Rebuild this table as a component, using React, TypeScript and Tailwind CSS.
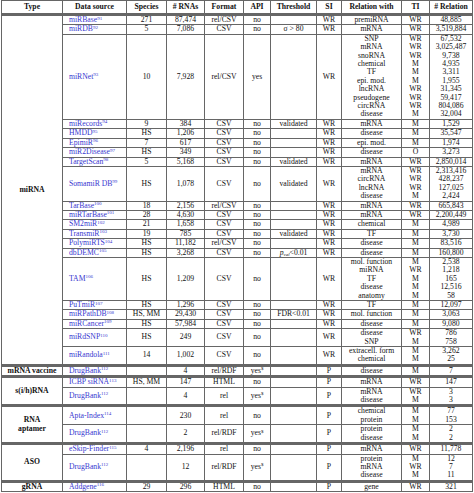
import type { ReactNode } from "react";

type Rel = [string, string, string];

interface Row {
  src: string;
  cite: string;
  species?: string;
  rnas: string;
  format: string;
  api: ReactNode;
  thr?: ReactNode;
  si: string;
  rel: Rel[];
}

interface Group {
  type: ReactNode;
  rows: Row[];
}

const yesS = (
  <>
    yes<sup className="text-[5px]">$</sup>
  </>
);

const groups: Group[] = [
  {
    type: "miRNA",
    rows: [
      { src: "miRBase", cite: "91", species: "271", rnas: "87,474", format: "rel/CSV", api: "no", si: "WR", rel: [["premiRNA", "WR", "48,885"]] },
      { src: "miRDB", cite: "92", species: "5", rnas: "7,086", format: "CSV", api: "no", thr: "σ > 80", si: "WR", rel: [["mRNA", "WR", "3,519,884"]] },
      {
        src: "miRNet", cite: "93", species: "10", rnas: "7,928", format: "rel/CSV", api: "yes", si: "WR",
        rel: [
          ["SNP", "WR", "67,532"],
          ["mRNA", "WR", "3,025,487"],
          ["snoRNA", "WR", "9,738"],
          ["chemical", "M", "4,935"],
          ["TF", "M", "3,311"],
          ["epi. mod.", "M", "1,955"],
          ["lncRNA", "WR", "31,345"],
          ["pseudogene", "WR", "59,417"],
          ["circRNA", "WR", "804,086"],
          ["disease", "M", "32,004"],
        ],
      },
      { src: "miRecords", cite: "94", species: "9", rnas: "384", format: "CSV", api: "no", thr: "validated", si: "WR", rel: [["mRNA", "M", "1,529"]] },
      { src: "HMDD", cite: "95", species: "HS", rnas: "1,206", format: "CSV", api: "no", si: "WR", rel: [["disease", "M", "35,547"]] },
      { src: "EpimiR", cite: "96", species: "7", rnas: "617", format: "CSV", api: "no", si: "WR", rel: [["epi. mod.", "M", "1,974"]] },
      { src: "miR2Disease", cite: "97", species: "HS", rnas: "349", format: "CSV", api: "no", si: "WR", rel: [["disease", "O", "3,273"]] },
      { src: "TargetScan", cite: "98", species: "5", rnas: "5,168", format: "CSV", api: "no", thr: "validated", si: "WR", rel: [["mRNA", "WR", "2,850,014"]] },
      {
        src: "SomamiR DB", cite: "99", species: "HS", rnas: "1,078", format: "CSV", api: "no", thr: "validated", si: "WR",
        rel: [
          ["mRNA", "WR", "2,313,416"],
          ["circRNA", "WR", "428,237"],
          ["lncRNA", "WR", "127,025"],
          ["disease", "M", "2,424"],
        ],
      },
      { src: "TarBase", cite: "100", species: "18", rnas: "2,156", format: "rel/CSV", api: "no", si: "WR", rel: [["mRNA", "WR", "665,843"]] },
      { src: "miRTarBase", cite: "101", species: "28", rnas: "4,630", format: "CSV", api: "no", si: "WR", rel: [["mRNA", "WR", "2,200,449"]] },
      { src: "SM2miR", cite: "102", species: "21", rnas: "1,658", format: "CSV", api: "no", si: "WR", rel: [["chemical", "M", "4,989"]] },
      { src: "TransmiR", cite: "103", species: "19", rnas: "785", format: "CSV", api: "no", thr: "validated", si: "WR", rel: [["TF", "M", "3,730"]] },
      { src: "PolymiRTS", cite: "104", species: "HS", rnas: "11,182", format: "rel/CSV", api: "no", si: "WR", rel: [["disease", "M", "83,516"]] },
      {
        src: "dbDEMC", cite: "105", species: "HS", rnas: "3,268", format: "CSV", api: "no", si: "WR",
        thr: (
          <>
            <i>p</i>
            <sub className="text-[5px] italic">val</sub>&lt;0.01
          </>
        ),
        rel: [["disease", "M", "160,800"]],
      },
      {
        src: "TAM", cite: "106", species: "HS", rnas: "1,209", format: "CSV", api: "no", si: "WR",
        rel: [
          ["mol. function", "M", "2,538"],
          ["miRNA", "WR", "1,218"],
          ["TF", "M", "165"],
          ["disease", "M", "12,516"],
          ["anatomy", "M", "58"],
        ],
      },
      { src: "PuTmiR", cite: "107", species: "HS", rnas: "1,296", format: "CSV", api: "no", si: "WR", rel: [["TF", "M", "12,097"]] },
      { src: "miRPathDB", cite: "108", species: "HS, MM", rnas: "29,430", format: "CSV", api: "no", thr: "FDR<0.01", si: "WR", rel: [["mol. function", "M", "3,063"]] },
      { src: "miRCancer", cite: "109", species: "HS", rnas: "57,984", format: "CSV", api: "no", si: "WR", rel: [["disease", "M", "9,080"]] },
      {
        src: "miRdSNP", cite: "110", species: "HS", rnas: "249", format: "CSV", api: "no", si: "WR",
        rel: [
          ["disease", "WR", "786"],
          ["SNP", "M", "758"],
        ],
      },
      {
        src: "miRandola", cite: "111", species: "14", rnas: "1,002", format: "CSV", api: "no", si: "WR",
        rel: [
          ["extracell. form", "M", "3,262"],
          ["chemical", "M", "25"],
        ],
      },
    ],
  },
  {
    type: "mRNA vaccine",
    rows: [{ src: "DrugBank", cite: "112", rnas: "4", format: "rel/RDF", api: yesS, si: "P", rel: [["disease", "M", "7"]] }],
  },
  {
    type: "s(i/h)RNA",
    rows: [
      { src: "ICBP siRNA", cite: "113", species: "HS, MM", rnas: "147", format: "HTML", api: "no", si: "P", rel: [["mRNA", "WR", "147"]] },
      {
        src: "DrugBank", cite: "112", rnas: "4", format: "rel", api: yesS, si: "P",
        rel: [
          ["mRNA", "WR", "3"],
          ["disease", "M", "3"],
        ],
      },
    ],
  },
  {
    type: (
      <>
        RNA
        <br />
        aptamer
      </>
    ),
    rows: [
      {
        src: "Apta-Index", cite: "114", rnas: "230", format: "rel", api: "no", si: "P",
        rel: [
          ["chemical", "M", "77"],
          ["protein", "M", "153"],
        ],
      },
      {
        src: "DrugBank", cite: "112", rnas: "2", format: "rel/RDF", api: yesS, si: "P",
        rel: [
          ["protein", "M", "2"],
          ["disease", "M", "2"],
        ],
      },
    ],
  },
  {
    type: "ASO",
    rows: [
      { src: "eSkip-Finder", cite: "115", species: "4", rnas: "2,196", format: "rel", api: "no", si: "P", rel: [["mRNA", "WR", "11,778"]] },
      {
        src: "DrugBank", cite: "112", rnas: "12", format: "rel/RDF", api: yesS, si: "P",
        rel: [
          ["protein", "M", "12"],
          ["mRNA", "WR", "7"],
          ["disease", "M", "11"],
        ],
      },
    ],
  },
  {
    type: "gRNA",
    rows: [{ src: "Addgene", cite: "116", species: "29", rnas: "296", format: "HTML", api: "no", si: "P", rel: [["gene", "WR", "321"]] }],
  },
];

const headers = ["Type", "Data source", "Species", "# RNAs", "Format", "API", "Threshold", "SI", "Relation with", "TI", "# Relation"];
const widths = ["w-[61px]", "w-[64px]", "w-[40px]", "w-[38px]", "w-[39px]", "w-[27px]", "w-[46px]", "w-[25px]", "w-[60px]", "w-[28px]", "w-[43px]"];

const cell = "border border-[#666] p-0 text-center align-middle";

function Stack({ items }: { items: string[] }) {
  return (
    <div className="flex flex-col">
      {items.map((t, i) => (
        <div key={i} className="leading-[8.4px] whitespace-nowrap">
          {t}
        </div>
      ))}
    </div>
  );
}

export default function App() {
  return (
    <div className="bg-white w-[474px] h-[493px] pl-px text-[#111] font-['Liberation_Serif',serif] text-[7.7px]">
      <table className="table-fixed border-collapse w-[471px]">
        <colgroup>
          {widths.map((w, i) => (
            <col key={i} className={w} />
          ))}
        </colgroup>
        <thead>
          <tr>
            {headers.map((h) => (
              <th key={h} className={`${cell} h-[12px] leading-[12px] font-bold whitespace-nowrap`}>
                {h}
              </th>
            ))}
          </tr>
        </thead>
        <tbody>
          {groups.map((g, gi) =>
            g.rows.map((r, ri) => {
              const top = ri === 0 ? "border-t-[3px] border-t-double" : "";
              return (
                <tr key={`${gi}-${ri}`} className={top}>
                  {ri === 0 && (
                    <td rowSpan={g.rows.length} className={`${cell} ${top} font-bold leading-[8.4px]`}>
                      {g.type}
                    </td>
                  )}
                  <td className={`${cell} ${top} text-left pl-[6px] leading-[8.4px] whitespace-nowrap text-[#3838d0]`}>
                    {r.src}
                    <sup className="text-[5px]">{r.cite}</sup>
                  </td>
                  <td className={`${cell} ${top} leading-[8.4px] whitespace-nowrap`}>{r.species}</td>
                  <td className={`${cell} ${top} leading-[8.4px]`}>{r.rnas}</td>
                  <td className={`${cell} ${top} leading-[8.4px]`}>{r.format}</td>
                  <td className={`${cell} ${top} leading-[8.4px]`}>{r.api}</td>
                  <td className={`${cell} ${top} leading-[8.4px] whitespace-nowrap`}>{r.thr}</td>
                  <td className={`${cell} ${top} leading-[8.4px]`}>{r.si}</td>
                  <td className={`${cell} ${top}`}>
                    <Stack items={r.rel.map((x) => x[0])} />
                  </td>
                  <td className={`${cell} ${top}`}>
                    <Stack items={r.rel.map((x) => x[1])} />
                  </td>
                  <td className={`${cell} ${top}`}>
                    <Stack items={r.rel.map((x) => x[2])} />
                  </td>
                </tr>
              );
            })
          )}
        </tbody>
      </table>
    </div>
  );
}
